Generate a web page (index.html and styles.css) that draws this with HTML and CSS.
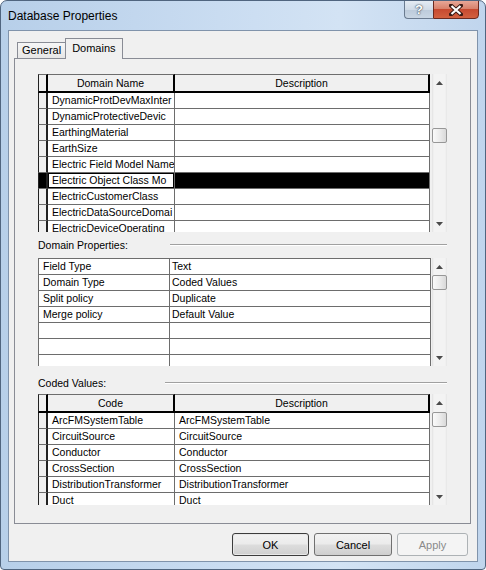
FILE: index.html
```html
<!DOCTYPE html>
<html lang="en">
<head>
  <meta charset="UTF-8">
  <title>Database Properties</title>
  <link rel="stylesheet" href="styles.css">
</head>
<body>
  <div class="window">
    <div class="titlebar">
      <span class="title">Database Properties</span>
      <div class="caption">
        <div class="cap cap-help">?</div>
        <div class="cap cap-close">
          <svg width="14" height="12" viewBox="0 0 14 12">
            <path d="M2 1.5 L12 10.5 M12 1.5 L2 10.5" stroke="#3a1a14" stroke-width="4" stroke-linecap="square"/>
            <path d="M2.5 2 L11.5 10 M11.5 2 L2.5 10" stroke="#fff" stroke-width="2.2"/>
          </svg>
        </div>
      </div>
    </div>

    <div class="client">
      <div class="tabstrip">
        <div class="tab">General</div>
        <div class="tab tab-active">Domains</div>
      </div>

      <div class="panel">
        <!-- domain list -->
        <div class="grid grid-domains">
          <div class="grid-view">
            <table class="table table-domains">
              <colgroup><col class="c-sel"><col class="c-name"><col class="c-desc"></colgroup>
              <tr class="head"><th class="sel"></th><th>Domain Name</th><th>Description</th></tr>
              <tr><td class="sel"></td><td>DynamicProtDevMaxInter</td><td></td></tr>
              <tr><td class="sel"></td><td>DynamicProtectiveDevic</td><td></td></tr>
              <tr><td class="sel"></td><td>EarthingMaterial</td><td></td></tr>
              <tr><td class="sel"></td><td>EarthSize</td><td></td></tr>
              <tr><td class="sel"></td><td>Electric Field Model Name</td><td></td></tr>
              <tr class="selected"><td class="sel"></td><td class="editing">Electric Object Class Mo</td><td></td></tr>
              <tr><td class="sel"></td><td>ElectricCustomerClass</td><td></td></tr>
              <tr><td class="sel"></td><td>ElectricDataSourceDomai</td><td></td></tr>
              <tr><td class="sel"></td><td>ElectricDeviceOperating</td><td></td></tr>
            </table>
          </div>
          <div class="scrollbar">
            <div class="sb-arrow"><svg width="7" height="4"><polygon points="0,4 3.5,0 7,4"/></svg></div>
            <div class="sb-track"><div class="sb-thumb thumb-mid"></div></div>
            <div class="sb-arrow"><svg width="7" height="4"><polygon points="0,0 7,0 3.5,4"/></svg></div>
          </div>
        </div>

        <div class="section section-props">
          <span class="section-label">Domain Properties:</span>
          <span class="rule"></span>
        </div>

        <!-- domain properties -->
        <div class="grid grid-props">
          <div class="grid-view">
            <table class="table table-props">
              <colgroup><col class="c-key"><col class="c-val"></colgroup>
              <tr><td>Field Type</td><td class="val">Text</td></tr>
              <tr><td>Domain Type</td><td class="val">Coded Values</td></tr>
              <tr><td>Split policy</td><td class="val">Duplicate</td></tr>
              <tr><td>Merge policy</td><td class="val">Default Value</td></tr>
              <tr><td></td><td class="val"></td></tr>
              <tr><td></td><td class="val"></td></tr>
              <tr><td></td><td class="val"></td></tr>
            </table>
          </div>
          <div class="scrollbar">
            <div class="sb-arrow"><svg width="7" height="4"><polygon points="0,4 3.5,0 7,4"/></svg></div>
            <div class="sb-track"><div class="sb-thumb"></div></div>
            <div class="sb-arrow"><svg width="7" height="4"><polygon points="0,0 7,0 3.5,4"/></svg></div>
          </div>
        </div>

        <div class="section section-codes">
          <span class="section-label">Coded Values:</span>
          <span class="rule"></span>
        </div>

        <!-- coded values -->
        <div class="grid grid-codes">
          <div class="grid-view">
            <table class="table table-codes">
              <colgroup><col class="c-sel"><col class="c-name"><col class="c-desc"></colgroup>
              <tr class="head"><th class="sel"></th><th>Code</th><th>Description</th></tr>
              <tr><td class="sel"></td><td>ArcFMSystemTable</td><td>ArcFMSystemTable</td></tr>
              <tr><td class="sel"></td><td>CircuitSource</td><td>CircuitSource</td></tr>
              <tr><td class="sel"></td><td>Conductor</td><td>Conductor</td></tr>
              <tr><td class="sel"></td><td>CrossSection</td><td>CrossSection</td></tr>
              <tr><td class="sel"></td><td>DistributionTransformer</td><td>DistributionTransformer</td></tr>
              <tr><td class="sel"></td><td>Duct</td><td>Duct</td></tr>
            </table>
          </div>
          <div class="scrollbar">
            <div class="sb-arrow"><svg width="7" height="4"><polygon points="0,4 3.5,0 7,4"/></svg></div>
            <div class="sb-track"><div class="sb-thumb thumb-top"></div></div>
            <div class="sb-arrow"><svg width="7" height="4"><polygon points="0,0 7,0 3.5,4"/></svg></div>
          </div>
        </div>
      </div>

      <div class="buttons">
        <button class="btn btn-ok">OK</button>
        <button class="btn btn-cancel">Cancel</button>
        <button class="btn btn-apply" disabled>Apply</button>
      </div>
    </div>
  </div>
</body>
</html>
```

FILE: styles.css
```css
body {
  margin: 0;
  font-family: "Liberation Sans", Arial, sans-serif;
  font-size: 10.5px;
  color: #000;
  background: #fff;
}
.window {
  width: 486px;
  height: 570px;
  box-sizing: border-box;
  border: 1px solid #50657f;
  border-radius: 7px 7px 4px 4px;
  background: linear-gradient(90deg, #b7cfe9 0%, #c9dcf1 45%, #d3e3f4 70%, #c0d5ed 100%);
  display: flex;
  flex-direction: column;
  overflow: hidden;
}
.titlebar {
  height: 29px;
  display: flex;
  align-items: flex-start;
  flex-shrink: 0;
}
.title {
  font-size: 12px;
  padding: 8px 0 0 7px;
  color: #000;
}
.caption {
  margin-left: auto;
  margin-right: 6px;
  margin-top: -1px;
  display: flex;
}
.cap {
  height: 19px;
  box-sizing: border-box;
  display: flex;
  align-items: center;
  justify-content: center;
}
.cap-help {
  width: 29px;
  border: 1px solid #6a7b90;
  border-right: none;
  border-radius: 0 0 0 4px;
  background: linear-gradient(180deg, #e4ebf3 0%, #d0dbe7 50%, #bccbdb 51%, #c9d6e4 100%);
  color: #fff;
  font-size: 13px;
  font-weight: bold;
  text-shadow: 0 0 2px #33404f, 0 0 1px #33404f;
}
.cap-close {
  width: 46px;
  border: 1px solid #6b2a20;
  border-radius: 0 0 4px 0;
  background: linear-gradient(180deg, #e8a797 0%, #d8826c 45%, #c74a30 50%, #d2603f 100%);
}
.client {
  flex: 1;
  margin: 0 7px 7px 7px;
  border: 1px solid #8093ab;
  background: #f0f0f0;
  display: flex;
  flex-direction: column;
}
.tabstrip {
  height: 20px;
  margin: 7px 0 0 8px;
  display: flex;
  align-items: flex-end;
  position: relative;
  z-index: 1;
}
.tab {
  height: 16px;
  box-sizing: border-box;
  border: 1px solid #898c95;
  border-bottom: none;
  padding: 1px 4px 0 4px;
  font-size: 11px;
  background: linear-gradient(180deg, #f6f6f6, #e6e6e6);
}
.tab-active {
  height: 21px;
  margin-bottom: -1px;
  margin-left: -1px;
  padding: 3px 6px 0 6px;
  background: #f0f0f0;
}
.panel {
  height: 466px;
  box-sizing: border-box;
  margin: 0 6px 0 5px;
  border: 1px solid #898c95;
  background: #f0f0f0;
  padding-left: 23px;
}
.grid {
  display: flex;
  gap: 2px;
}
.grid-domains {
  margin-top: 15px;
  height: 158px;
}
.grid-props {
  height: 108px;
  gap: 1px;
}
.grid-codes {
  height: 111px;
}
.grid-view {
  overflow: hidden;
}
.table {
  table-layout: fixed;
  border-collapse: separate;
  border-spacing: 0;
  background: #fff;
}
.table-domains, .table-codes {
  width: 392px;
}
.table-props {
  width: 393px;
  border-top: 1px solid #6d6d6d;
  border-left: 1px solid #6d6d6d;
}
.c-sel { width: 10px; }
.c-name { width: 127px; }
.c-desc { width: 255px; }
.c-key { width: 131px; }
.c-val { width: 261px; }
.table tr {
  height: 16px;
}
.table td, .table th {
  padding: 0 0 0 4px;
  border-right: 1px solid #6d6d6d;
  border-bottom: 1px solid #6d6d6d;
  white-space: nowrap;
  overflow: hidden;
  text-align: left;
  font-weight: normal;
  line-height: 15px;
}
.table td.val {
  padding-left: 2px;
}
.table tr.head {
  height: 19px;
}
.table th {
  background: #f0f0f0;
  text-align: center;
  border-top: 1px solid #6d6d6d;
  border-bottom: 2px solid #000;
  border-right: 2px solid #000;
  line-height: 16px;
  padding: 0;
}
.table .sel {
  padding: 0;
  background: #f0f0f0;
  border-left: 1px solid #222;
  border-right: 2px solid #222;
}
.table th.sel {
  border-right: 2px solid #000;
}
.table tr.selected td {
  background: #000;
}
.table tr.selected td.editing {
  background: #fff;
  box-shadow: inset 0 0 0 1px #000;
}
.scrollbar {
  width: 15px;
  display: flex;
  flex-direction: column;
  background: linear-gradient(90deg, #e2e2e2 0, #f3f3f3 2px, #f3f3f3 13px, #e6e6e6 15px);
}
.sb-arrow {
  height: 17px;
  display: flex;
  align-items: center;
  justify-content: center;
  flex-shrink: 0;
}
.sb-arrow svg {
  fill: #4a4a4a;
}
.sb-track {
  flex: 1;
}
.sb-thumb {
  height: 15px;
  box-sizing: border-box;
  border: 1px solid #979797;
  border-radius: 2px;
  background: linear-gradient(90deg, #fafafa 0%, #ececec 50%, #d9d9d9 100%);
}
.thumb-mid {
  margin-top: 37px;
}
.thumb-top {
  margin-top: 1px;
}
.section {
  height: 14px;
  display: flex;
  align-items: center;
}
.section-props {
  margin: 6px 0 6px 0;
}
.section-codes {
  margin: 10px 0 4px 0;
}
.section-label {
  flex-shrink: 0;
}
.section-props .section-label {
  width: 132px;
}
.section-codes .section-label {
  width: 127px;
}
.rule {
  width: 277px;
  height: 0;
  border-top: 1px solid #a0a0a0;
  border-bottom: 1px solid #fff;
}
.section-codes .rule {
  width: 282px;
}
.buttons {
  display: flex;
  justify-content: flex-end;
  gap: 5px;
  margin: 9px 9px 0 0;
}
.btn {
  height: 23px;
  font-family: "Liberation Sans", Arial, sans-serif;
  font-size: 11px;
  color: #000;
  border: 1px solid #707070;
  border-radius: 3px;
  background: linear-gradient(180deg, #f2f2f2 0%, #ebebeb 48%, #dddddd 52%, #cfcfcf 100%);
  padding: 0;
}
.btn-ok {
  width: 77px;
  border-color: #3c3c3c;
  box-shadow: inset 0 0 0 1px #e8e8e8;
}
.btn-cancel {
  width: 78px;
}
.btn-apply {
  width: 71px;
  color: #8a8a8a;
  border-color: #adb2b5;
  background: #f4f4f4;
}
```
